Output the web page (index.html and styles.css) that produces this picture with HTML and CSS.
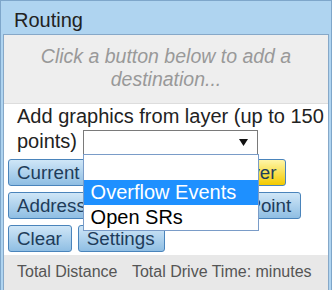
FILE: index.html
```html
<!DOCTYPE html>
<html lang="en">
<head>
  <meta charset="UTF-8">
  <title>Routing</title>
  <link rel="stylesheet" href="styles.css">
</head>
<body>
  <div class="panel">
    <div class="panel-title">Routing</div>
    <div class="panel-body">
      <div class="hint">Click a button below to add a destination...</div>

      <div class="controls">
        <div class="layer-line">
          Add graphics from layer (up to 150 points)
          <span class="select-wrap">
            <span class="fake-select">
              <svg class="arrow" width="9" height="7" viewBox="0 0 9 7"><polygon points="0,0 9,0 4.5,7" fill="#111"/></svg>
            </span>
            <ul class="dropdown">
              <li>&nbsp;</li>
              <li class="selected">Overflow Events</li>
              <li>Open SRs</li>
            </ul>
          </span>
        </div>

        <div class="button-row">
          <button class="btn">Current Location</button>
          <button class="btn btn-active">From Layer</button>
        </div>
        <div class="button-row">
          <button class="btn">Address</button>
          <button class="btn">Add Destination Point</button>
        </div>
        <div class="button-row">
          <button class="btn">Clear</button>
          <button class="btn">Settings</button>
        </div>
      </div>

      <div class="totals">
        <span>Total Distance</span>
        <span class="drive-time">Total Drive Time: minutes</span>
      </div>
    </div>
  </div>
</body>
</html>
```

FILE: styles.css
```css
/* Routing panel */
body, html {
  margin: 0;
  padding: 0;
  overflow: hidden;
}

body {
  font-family: Arial, "Liberation Sans", sans-serif;
  color: #222;
}

.panel {
  background-color: #afd4f0;
  border: 1px solid #7ea6ca;
  padding: 0 2px;
}

.panel-title {
  font-size: 20px;
  line-height: 23px;
  padding: 8px 11px 2px;
}

.panel-body {
  background-color: #fff;
  border: 1px solid #86a8c8;
}

.hint {
  background-color: #eee;
  border-bottom: 1px solid #ddd;
  color: #999;
  font-style: italic;
  font-size: 19.5px;
  line-height: 23px;
  text-align: center;
  padding: 10px 10px 12px;
}

.controls {
  padding: 0 0 3px 4px;
}

.layer-line {
  font-size: 20px;
  line-height: 25px;
  padding-left: 9px;
  margin-bottom: 4px;
}

.select-wrap {
  position: relative;
  display: inline-block;
  vertical-align: top;
  margin-top: 1px;
}

.fake-select {
  display: block;
  box-sizing: border-box;
  width: 175px;
  height: 25px;
  background-color: #fff;
  border: 1px solid #7a7a7a;
  position: relative;
}

.arrow {
  position: absolute;
  right: 9px;
  top: 8px;
}

.dropdown {
  position: absolute;
  top: 24px;
  left: 0;
  z-index: 5;
  width: 176px;
  box-sizing: border-box;
  margin: 0;
  padding: 0;
  list-style-type: none;
  background-color: #fff;
  border: 1px solid #7a9cc8;
}

.dropdown li {
  height: 25px;
  line-height: 25px;
  padding-left: 7px;
  color: #000;
}

.dropdown li.selected {
  background-color: #1e90ff;
  color: #fff;
}

.button-row {
  display: flex;
  gap: 6px;
  margin-bottom: 6px;
}

.button-row:last-child {
  margin-bottom: 0;
}

.btn {
  box-sizing: border-box;
  height: 27px;
  padding: 0 9px 0 8px;
  font-family: Arial, "Liberation Sans", sans-serif;
  font-size: 18.75px;
  color: #1e3c5a;
  background: linear-gradient(to bottom, #cfe6f7, #8fbee3);
  border: 1px solid #4a84bb;
  border-radius: 3px;
  cursor: pointer;
}

.btn-active {
  background: linear-gradient(to bottom, #fff6a8, #f2ca00);
}

.totals {
  background-color: #e8e8e8;
  color: #555;
  font-size: 16px;
  line-height: 18px;
  padding: 8px 13px 20px;
}

.drive-time {
  margin-left: 10px;
}
```
